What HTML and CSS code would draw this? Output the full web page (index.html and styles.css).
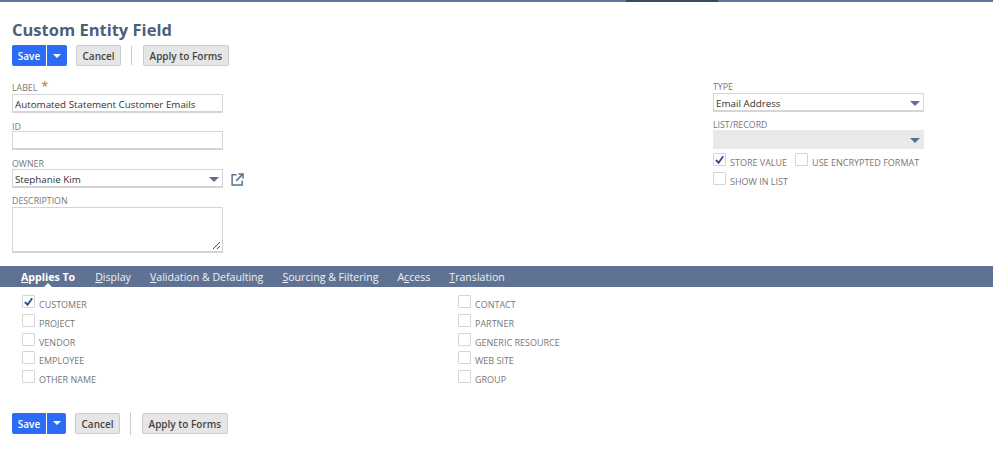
FILE: index.html
```html
<!DOCTYPE html>
<html lang="en">
<head>
<meta charset="utf-8">
<title>Custom Entity Field</title>
<link rel="stylesheet" href="styles.css">
</head>
<body>
<div class="topbar"><div class="topbar-active"></div></div>
<h1 class="title">Custom Entity Field</h1>
<div class="actions">
  <div class="save"><span class="save-main">Save</span><span class="save-arrow"><svg width="8" height="4" viewBox="0 0 8 4"><path d="M0 0h8L4 4z" fill="#fff"/></svg></span></div>
  <span class="btn">Cancel</span>
  <span class="sep"></span>
  <span class="btn">Apply to Forms</span>
</div>
<div class="form">
  <div class="col">
    <div class="lbl">LABEL <span class="star">*</span></div>
    <div class="box">Automated Statement Customer Emails</div>
    <div class="lbl gap">ID</div>
    <div class="box"></div>
    <div class="lbl gap">OWNER</div>
    <div class="owner">
      <div class="box select">Stephanie Kim<svg class="caret" width="10" height="5" viewBox="0 0 10 5"><path d="M0 0h10L5 5z" fill="#5b6f92"/></svg></div>
      <svg class="open" width="13" height="13" viewBox="0 0 14 14" fill="none" stroke="#5b7391" stroke-width="1.6"><path d="M6 2H1.2v10.8H12V8"/><path d="M5.5 8.5 12.5 1.5M8 1h5v5"/></svg>
    </div>
    <div class="lbl gap">DESCRIPTION</div>
    <div class="box area"><svg class="grip" width="9" height="9" viewBox="0 0 9 9" stroke="#444" stroke-width="1"><path d="M1 8 8 1M5 8l3-3"/></svg></div>
  </div>
  <div class="col col-right">
    <div class="lbl">TYPE</div>
    <div class="box select">Email Address<svg class="caret" width="10" height="5" viewBox="0 0 10 5"><path d="M0 0h10L5 5z" fill="#5b6f92"/></svg></div>
    <div class="lbl gap">LIST/RECORD</div>
    <div class="box select off"><svg class="caret" width="10" height="5" viewBox="0 0 10 5"><path d="M0 0h10L5 5z" fill="#5b6f92"/></svg></div>
    <div class="checks-inline">
      <label class="chk"><span class="cb on"><svg width="12" height="10" viewBox="0 0 12 10"><path d="M2 5l3 3 5-7" fill="none" stroke="#2f4f87" stroke-width="2"/></svg></span>STORE VALUE</label>
      <label class="chk"><span class="cb"></span>USE ENCRYPTED FORMAT</label>
    </div>
    <label class="chk"><span class="cb"></span>SHOW IN LIST</label>
  </div>
</div>
<div class="tabs">
  <span class="tab active"><u>A</u>pplies To</span>
  <span class="tab"><u>D</u>isplay</span>
  <span class="tab"><u>V</u>alidation &amp; Defaulting</span>
  <span class="tab"><u>S</u>ourcing &amp; Filtering</span>
  <span class="tab">A<u>c</u>cess</span>
  <span class="tab"><u>T</u>ranslation</span>
</div>
<div class="applies">
  <div class="applies-col">
    <label class="chk row"><span class="cb on"><svg width="12" height="10" viewBox="0 0 12 10"><path d="M2 5l3 3 5-7" fill="none" stroke="#2f4f87" stroke-width="2"/></svg></span>CUSTOMER</label>
    <label class="chk row"><span class="cb"></span>PROJECT</label>
    <label class="chk row"><span class="cb"></span>VENDOR</label>
    <label class="chk row"><span class="cb"></span>EMPLOYEE</label>
    <label class="chk row"><span class="cb"></span>OTHER NAME</label>
  </div>
  <div class="applies-col">
    <label class="chk row"><span class="cb"></span>CONTACT</label>
    <label class="chk row"><span class="cb"></span>PARTNER</label>
    <label class="chk row"><span class="cb"></span>GENERIC RESOURCE</label>
    <label class="chk row"><span class="cb"></span>WEB SITE</label>
    <label class="chk row"><span class="cb"></span>GROUP</label>
  </div>
</div>
<div class="actions bottom">
  <div class="save"><span class="save-main">Save</span><span class="save-arrow"><svg width="8" height="4" viewBox="0 0 8 4"><path d="M0 0h8L4 4z" fill="#fff"/></svg></span></div>
  <span class="btn">Cancel</span>
  <span class="sep"></span>
  <span class="btn">Apply to Forms</span>
</div>
</body>
</html>
```
FILE: styles.css
```css
* { box-sizing: border-box; }
html, body { margin: 0; padding: 0; }
body { width: 993px; height: 463px; overflow: hidden; background: #fff; font-family: "Open Sans", sans-serif; color: #333; }
.topbar { height: 2px; background: #607799; padding-left: 626px; }
.topbar-active { width: 92px; height: 2px; background: #3d4a63; }
.title { margin: 17px 0 0 12px; height: 21px; font-size: 16.5px; line-height: 21px; font-weight: 700; color: #4d5f79; }
.actions { display: flex; align-items: center; margin: 5px 0 0 12px; height: 21px; }
.save { display: flex; width: 55px; height: 21px; border-radius: 2px; background: #2b6cf6; color: #fff; font-size: 10px; font-weight: 600; overflow: hidden; }
.save-main { width: 35px; line-height: 22px; text-align: center; border-right: 1px solid #fff; }
.save-arrow { flex: 1; display: flex; align-items: center; justify-content: center; }
.btn { height: 21px; margin-left: 9px; padding: 0 5.5px; line-height: 20px; font-size: 10px; font-weight: 600; color: #444; background: #e6e6e6; border: 1px solid #ccc; border-radius: 2px; }
.sep { width: 1px; height: 19px; margin-left: 10px; margin-right: 2px; background: #ccc; }
.form { display: flex; margin: 16px 0 0 12px; }
.col { width: 211px; }
.col-right { margin-left: 490px; margin-top: -1px; }
.lbl { height: 12px; font-size: 8.8px; line-height: 13px; color: #777; white-space: nowrap; }
.lbl.gap { margin-top: 8px; height: 10px; }
.col-right .lbl.gap { margin-top: 7px; height: 11px; }
.star { color: #c8963c; font-size: 12px; font-weight: 700; line-height: 10px; margin-left: 2px; }
.box { position: relative; height: 19px; padding-left: 2px; border: 1px solid #d5d5d5; border-bottom-width: 2px; font-size: 9.8px; line-height: 19px; color: #333; background: #fff; white-space: nowrap; }
.select .caret { position: absolute; right: 3px; top: 7px; }
.off { background: #e9e9e9; border-color: #e9e9e9; }
.owner { position: relative; width: 211px; margin: 1px 0 -1px; }
.open { position: absolute; left: 219px; top: 4px; }
.area { height: 46px; margin-top: 2px; }
.grip { position: absolute; right: 1px; bottom: 1px; }
.checks-inline { display: flex; margin-top: 4px; height: 19px; }
.chk { display: flex; align-items: flex-start; padding-top: 4px; font-size: 9px; color: #777; line-height: 12px; white-space: nowrap; }
.chk .cb { width: 13px; height: 13px; flex: none; margin-right: 4px; margin-top: -4px; border: 1px solid #d5d5d5; border-radius: 1px; display: flex; align-items: center; justify-content: center; }
.checks-inline .chk + .chk { margin-left: 8px; }
.tabs { display: flex; align-items: center; height: 21px; margin-top: 13px; padding: 1px 0 0 21px; background: #5f7294; color: #fff; font-size: 10.6px; line-height: 20px; }
.tab { position: relative; margin-right: 19px; color: #eef1f5; }
.tab.active { font-weight: 700; color: #fff; margin-right: 20px; }
.tab.active::after { content: ""; position: absolute; left: 50%; bottom: 0; margin-left: -4px; border: 4px solid transparent; border-top: 0; border-bottom-color: #fff; }
.applies { display: flex; padding: 8px 0 0 22px; }
.applies-col { width: 436px; }
.row { height: 18.8px; }
.bottom { margin: 24px 0 0 12px; }
.bottom .save { width: 54px; }
.bottom .sep { height: 23px; }
```
